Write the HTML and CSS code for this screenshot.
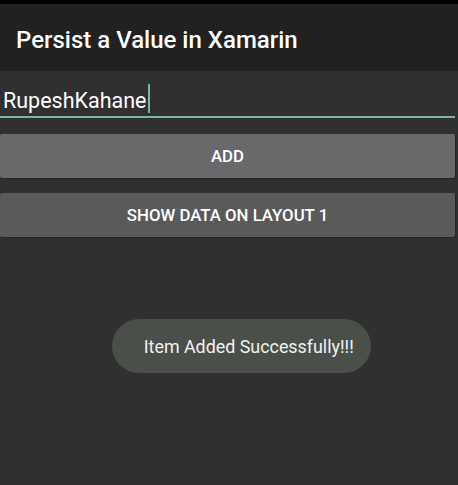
FILE: index.html
```html
<!DOCTYPE html>
<html>
<head>
<meta charset="utf-8">
<link rel="stylesheet" href="styles.css">
</head>
<body>
<div class="statusbar"></div>
<header class="toolbar">
  <h1 class="title">Persist a Value in Xamarin</h1>
</header>
<main class="content">
  <div class="field">
    <span class="field-text">RupeshKahane</span><span class="cursor"></span>
  </div>
  <button class="btn btn-add">ADD</button>
  <button class="btn btn-show">SHOW DATA ON LAYOUT 1</button>
  <div class="toast-wrap">
    <div class="toast"><span class="toast-text">Item Added Successfully!!!</span></div>
  </div>
</main>
</body>
</html>
```
FILE: styles.css
```css
* { box-sizing: border-box; }
html, body {
  margin: 0;
  padding: 0;
  width: 458px;
  height: 485px;
  background: #303030;
  font-family: Roboto, "Noto Sans", sans-serif;
  overflow: hidden;
}
.statusbar {
  height: 4px;
  background: #000;
}
.toolbar {
  height: 67px;
  background: #212121;
  display: flex;
  align-items: center;
  padding-left: 16px;
}
.title {
  margin: 0;
  padding-top: 4px;
  color: #fff;
  font-size: 24px;
  font-weight: 500;
  letter-spacing: 0;
}
.content {
  display: flex;
  flex-direction: column;
  padding-right: 3px;
}
.field {
  height: 47px;
  padding-left: 3px;
  padding-top: 13px;
  border-bottom: 2px solid #7fb3a8;
  display: flex;
  align-items: flex-start;
  color: #fff;
  font-size: 21.5px;
}
.field-text {
  line-height: 1;
  margin-top: 6px;
}
.cursor {
  width: 2px;
  height: 29px;
  margin-left: 1px;
  background: #7fb3a8;
}
.btn {
  border: 0;
  border-radius: 2px;
  height: 44px;
  color: #fff;
  font-family: Roboto, "Noto Sans", sans-serif;
  font-size: 16.8px;
  font-weight: 500;
  padding: 0;
  box-shadow: 1px 1px 1px rgba(0,0,0,0.25);
}
.btn-add {
  margin-top: 16px;
  background: #69686a;
}
.btn-show {
  margin-top: 15px;
  background: #5a5a5a;
}
.toast-wrap {
  margin-top: 82px;
  display: flex;
  justify-content: center;
  padding-left: 28px;
}
.toast {
  width: 259px;
  height: 54px;
  padding-left: 14px;
  border-radius: 27px;
  background: #4a4f4a;
  display: flex;
  align-items: center;
  justify-content: center;
}
.toast-text {
  color: #f2f2f2;
  font-size: 19px;
  display: inline-block;
  transform: scaleX(0.94);
  white-space: nowrap;
}
```
